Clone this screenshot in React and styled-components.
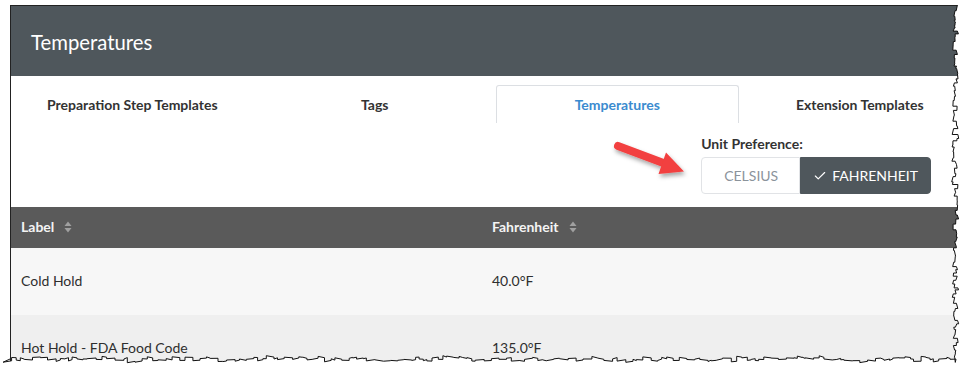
import React from "react";
import styled, { createGlobalStyle } from "styled-components";
import { Check } from "lucide-react";

const GlobalStyle = createGlobalStyle`
  body {
    margin: 0;
    background: #fff;
    font-family: Lato, "Open Sans", "Liberation Sans", sans-serif;
  }
`;

// jagged "torn paper" edge of the screenshot frame
const makeRand = (seed) => {
  let s = seed;
  return () => {
    s = (s * 9301 + 49297) % 233280;
    return s / 233280;
  };
};

const buildEdge = () => {
  const r = makeRand(17);
  const right = [];
  let y = 5;
  while (y < 358) {
    const x = 953 + r() * 5;
    right.push([x, y]);
    y += 2 + r() * 4;
    right.push([x + (r() - 0.5) * 3, y]);
  }
  const bottom = [];
  let x = 956;
  while (x > 10) {
    const yy = 357 + r() * 4.5;
    bottom.push([x, yy]);
    x -= 3 + r() * 6;
    bottom.push([x, yy + (r() - 0.5) * 3]);
  }
  bottom.push([10, 359]);
  const line = [...right, ...bottom].map((p) => p.map((v) => v.toFixed(1)).join(",")).join(" ");
  const mask = `964,0 ${line} 0,359 0,367 964,367`;
  return { line, mask };
};

const edge = buildEdge();

const Page = styled.div`
  position: relative;
  width: 964px;
  height: 367px;
  overflow: hidden;
  background: #fff;
  padding: 5px 0 0 10px;
  box-sizing: border-box;
`;

const Sheet = styled.div`
  width: 954px;
  height: 362px;
  overflow: hidden;
  border-top: 1px solid #222;
  border-left: 1px solid #222;
  background: #fff;
`;

const Inner = styled.div`
  width: 970px;
`;

const Header = styled.header`
  height: 70px;
  background: #4f575c;
  display: flex;
  align-items: center;
  padding: 2px 0 0 20px;
  box-sizing: border-box;
`;

const Title = styled.h1`
  margin: 0;
  font-size: 20.3px;
  font-weight: 400;
  color: #fff;
`;

const Tabs = styled.nav`
  display: flex;
  align-items: flex-end;
  height: 46px;
  border-bottom: 1px solid #dcdfe3;
`;

const Tab = styled.div`
  flex: 1;
  height: 38px;
  margin-bottom: -1px;
  padding-bottom: 1px;
  display: flex;
  align-items: center;
  justify-content: center;
  font-size: 14px;
  font-weight: 700;
  color: ${(p) => (p.$active ? "#3b8bcf" : "#333")};
  background: #fff;
  box-sizing: border-box;
  border: 1px solid ${(p) => (p.$active ? "#dcdfe3" : "transparent")};
  border-bottom: none;
  border-radius: 3px 3px 0 0;
`;

const Toolbar = styled.div`
  display: flex;
  justify-content: flex-end;
  padding: 13px 50px 13px 0;
`;

const UnitBox = styled.div`
  display: flex;
  flex-direction: column;
`;

const UnitLabel = styled.div`
  font-size: 14px;
  font-weight: 700;
  color: #333;
  line-height: 16px;
  margin-bottom: 5px;
`;

const ButtonGroup = styled.div`
  display: flex;
  height: 37px;
`;

const UnitButton = styled.button`
  display: flex;
  align-items: center;
  gap: 5px;
  height: 37px;
  padding: ${(p) => (p.$active ? "0 12px" : "0 21px 0 22px")};
  font-family: inherit;
  font-size: 14px;
  border: 1px solid ${(p) => (p.$active ? "#4f575c" : "#e1e3e6")};
  background: ${(p) => (p.$active ? "#4f575c" : "#fff")};
  color: ${(p) => (p.$active ? "#fff" : "#8b939b")};
  border-radius: ${(p) => (p.$active ? "0 4px 4px 0" : "4px 0 0 4px")};
  box-sizing: border-box;
`;

const TableHead = styled.div`
  display: grid;
  grid-template-columns: 471px 1fr;
  height: 41px;
  background: #5a5a5a;
`;

const HeadCell = styled.div`
  display: flex;
  align-items: center;
  gap: 10px;
  padding: 0 0 2px 10px;
  font-size: 14px;
  font-weight: 700;
  color: #f4f4f4;
`;

const Row = styled.div`
  display: grid;
  grid-template-columns: 471px 1fr;
  height: 67px;
  background: ${(p) => (p.$odd ? "#efefef" : "#f7f7f7")};
`;

const Cell = styled.div`
  display: flex;
  align-items: center;
  padding: 0 0 3px 10px;
  font-size: 14px;
  color: #2e2e2e;
`;

const Overlay = styled.svg`
  position: absolute;
  left: 0;
  top: 0;
  pointer-events: none;
`;

const SortIcon = () => (
  <svg width="8" height="12" viewBox="0 0 8 12">
    <path d="M4 0.5 L7.5 5 H0.5 Z" fill="#a0a0a0" />
    <path d="M4 11.5 L7.5 7 H0.5 Z" fill="#a0a0a0" />
  </svg>
);

const tabs = ["Preparation Step Templates", "Tags", "Temperatures", "Extension Templates"];

const rows = [
  { label: "Cold Hold", value: "40.0°F" },
  { label: "Hot Hold - FDA Food Code", value: "135.0°F" },
];

export default function App() {
  return (
    <>
      <GlobalStyle />
      <Page>
        <Sheet>
          <Inner>
            <Header>
              <Title>Temperatures</Title>
            </Header>
            <Tabs>
              {tabs.map((t) => (
                <Tab key={t} $active={t === "Temperatures"}>
                  {t}
                </Tab>
              ))}
            </Tabs>
            <Toolbar>
              <UnitBox>
                <UnitLabel>Unit Preference:</UnitLabel>
                <ButtonGroup>
                  <UnitButton>CELSIUS</UnitButton>
                  <UnitButton $active>
                    <Check size={14} strokeWidth={2} />
                    FAHRENHEIT
                  </UnitButton>
                </ButtonGroup>
              </UnitBox>
            </Toolbar>
            <TableHead>
              <HeadCell>
                Label <SortIcon />
              </HeadCell>
              <HeadCell>
                Fahrenheit <SortIcon />
              </HeadCell>
            </TableHead>
            {rows.map((r, i) => (
              <Row key={r.label} $odd={i % 2 === 1}>
                <Cell>{r.label}</Cell>
                <Cell>{r.value}</Cell>
              </Row>
            ))}
          </Inner>
        </Sheet>

        <Overlay width="964" height="367" viewBox="0 0 964 367">
          <defs>
            <filter id="arrowShadow" x="-20%" y="-20%" width="140%" height="160%">
              <feDropShadow dx="1.5" dy="3" stdDeviation="2" floodColor="#000" floodOpacity="0.35" />
            </filter>
          </defs>
          <g filter="url(#arrowShadow)">
            <line x1="618" y1="146" x2="666" y2="164" stroke="#f2403f" strokeWidth="8" strokeLinecap="round" />
            <polygon points="666,152.5 684,171.5 658.5,174" fill="#f2403f" />
          </g>
          <polygon points={edge.mask} fill="#fff" />
          <polyline points={edge.line} fill="none" stroke="#111" strokeWidth="1" />
        </Overlay>
      </Page>
    </>
  );
}
